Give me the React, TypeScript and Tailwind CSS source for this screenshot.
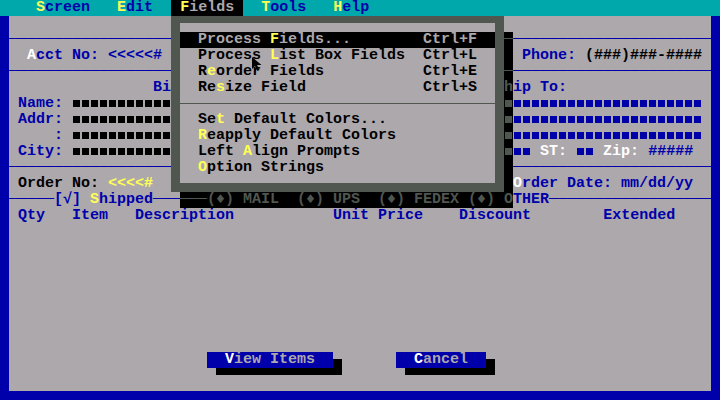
import React from 'react';

// text-mode palette
const BLUE = 'text-[#0000aa]';
const YEL = 'text-[#ffff55]';
const WHT = 'text-white';
const BLK = 'text-black';
const LG = 'text-[#aca8ac]';

// [column, content, colour, width in cells (defaults to text length)]
type Seg = [number, React.ReactNode, string?, number?];

// field fill: one small block per character cell
function Blocks({ n }: { n: number }) {
  return (
    <>
      {Array.from({ length: n }, (_, i) => (
        <span key={i} className="inline-block align-top w-[9px] h-4 pt-[4px] pl-[1px]">
          <span className="block w-[7px] h-[7px] bg-current" />
        </span>
      ))}
    </>
  );
}

// one 16px text row; each segment is placed at its column
function Row({ segs, start = 1, className = '' }: { segs: Seg[]; start?: number; className?: string }) {
  let cur = start;
  const out: React.ReactNode[] = [];
  segs.forEach(([col, text, cls, len], i) => {
    if (col > cur) out.push(<span key={'p' + i}>{' '.repeat(col - cur)}</span>);
    out.push(
      <span key={i} className={cls}>
        {text}
      </span>
    );
    cur = col + (len ?? [...String(text)].length);
  });
  return <div className={`h-4 leading-4 whitespace-pre ${className}`}>{out}</div>;
}

const line = (n: number) => '─'.repeat(n);
const fill = (col: number, n: number, cls: string): Seg => [col, <Blocks n={n} />, cls, n];

const menuItems: ({ label: string; k: number; sc?: string; sel?: boolean } | null)[] = [
  { label: 'Process Fields...', k: 8, sc: 'Ctrl+F', sel: true },
  { label: 'Process List Box Fields', k: 8, sc: 'Ctrl+L' },
  { label: 'Reorder Fields', k: 1, sc: 'Ctrl+E' },
  { label: 'Resize Field', k: 2, sc: 'Ctrl+S' },
  null,
  { label: 'Set Default Colors...', k: 2 },
  { label: 'Reapply Default Colors', k: 0 },
  { label: 'Left Align Prompts', k: 5 },
  { label: 'Option Strings', k: 0 },
];

function FieldsMenu() {
  return (
    <>
      <div className="absolute left-[171px] top-4 w-[333px] h-[176px] bg-[#505650] pt-[7px] px-[9px] pb-[9px]">
        <div className="h-full bg-[#aca8ac] pt-[9px]">
          {menuItems.map((it, i) =>
            it ? (
              <div
                key={i}
                className={`flex h-4 leading-4 whitespace-pre pl-[18px] ${it.sel ? 'bg-black ' + LG : BLK}`}
              >
                <span className="w-[225px]">
                  {it.label.slice(0, it.k)}
                  <span className={YEL}>{it.label[it.k]}</span>
                  {it.label.slice(it.k + 1)}
                </span>
                <span>{it.sc}</span>
              </div>
            ) : (
              <div key={i} className="h-4 pt-[7px]">
                <div className="h-px bg-[#505650]" />
              </div>
            )
          )}
        </div>
      </div>

      {/* drop shadow: right column and bottom row */}
      <div className="absolute left-[504px] top-8 w-[9px] bg-black text-[#505650]">
        {['─', ' ', '─', 'h', '■', '■', '■', '■', ' ', ' '].map((g, i) => (
          <div key={i} className="h-4 leading-4 whitespace-pre">
            {g === '■' ? <Blocks n={1} /> : g}
          </div>
        ))}
      </div>
      <div className="absolute left-[180px] top-[192px] w-[333px] h-4 leading-4 whitespace-pre bg-black text-[#505650]">
        {'───(♦) MAIL  (♦) UPS  (♦) FEDEX (♦) O'}
      </div>

      {/* mouse pointer */}
      <svg className="absolute left-[252px] top-[57px]" width="11" height="15" viewBox="0 0 11 15">
        <path d="M0 0 L0 12 L3 9 L5.5 14 L7.5 13 L5 8 L9.5 8 Z" fill="#000" />
      </svg>
    </>
  );
}

function DosButton({ hot, rest }: { hot: string; rest: string }) {
  return (
    <button className="h-4 leading-4 px-[18px] bg-[#0000aa] text-[#aca8ac] whitespace-pre shadow-[9px_7px_0_#000]">
      <span className="text-white">{hot}</span>
      {rest}
    </button>
  );
}

// horizontal rule split around the open menu
const ruleSegs: Seg[] = [
  [1, line(18), BLUE],
  [57, line(22), BLUE],
];

export default function App() {
  return (
    <div className="relative w-[720px] h-[400px] overflow-hidden bg-[#aca8ac] font-['Liberation_Mono',monospace] text-[15px] font-bold">
      {/* menu bar */}
      <Row
        start={0}
        className="bg-[#00a8ac]"
        segs={[
          [4, 'S', YEL],
          [5, 'creen', BLUE],
          [13, 'E', YEL],
          [14, 'dit', BLUE],
          [19, ' ', 'bg-black'],
          [20, 'F', 'bg-black ' + YEL],
          [21, 'ields ', 'bg-black ' + LG],
          [29, 'T', YEL],
          [30, 'ools', BLUE],
          [37, 'H', YEL],
          [38, 'elp', BLUE],
        ]}
      />

      <div className="flex h-[375px]">
        <div className="w-[9px] bg-[#0000aa]" />
        <div className="flex-1 flex flex-col">
          <Row segs={[]} />
          <Row segs={ruleSegs} />
          <Row
            segs={[
              [3, 'A', WHT],
              [4, 'cct No: ', BLUE],
              [12, '<<<<<#', BLUE],
              [58, 'Phone:', BLUE],
              [65, '(###)###-####', BLK],
            ]}
          />
          <Row segs={ruleSegs} />
          <Row segs={[[17, 'Bi', BLUE], [57, 'ip To:', BLUE]]} />
          <Row segs={[[2, 'Name:', BLUE], fill(8, 11, BLK), fill(57, 21, BLUE)]} />
          <Row segs={[[2, 'Addr:', BLUE], fill(8, 11, BLK), fill(57, 21, BLUE)]} />
          <Row segs={[[6, ':', BLUE], fill(8, 11, BLK), fill(57, 21, BLUE)]} />
          <Row
            segs={[
              [2, 'City:', BLUE],
              fill(8, 11, BLK),
              fill(57, 2, BLUE),
              [60, 'ST:', WHT],
              fill(64, 2, BLUE),
              [67, 'Zip:', WHT],
              [72, '#####', BLUE],
            ]}
          />
          <Row segs={ruleSegs} />
          <Row
            segs={[
              [2, 'Order No: ', BLK],
              [12, '<<<<#', YEL],
              [57, 'O', WHT],
              [58, 'rder Date: mm/dd/yy', BLUE],
            ]}
          />
          <Row
            segs={[
              [1, '─────[√] ', BLUE],
              [10, 'S', YEL],
              [11, 'hipped───', BLUE],
              [57, 'THER' + line(18), BLUE],
            ]}
          />
          <Row
            segs={[
              [2, 'Qty', BLUE],
              [8, 'Item', BLUE],
              [15, 'Description', BLUE],
              [37, 'Unit Price', BLUE],
              [51, 'Discount', BLUE],
              [67, 'Extended', BLUE],
            ]}
          />
          <div className="h-32" />
          <div className="flex h-4 pl-[198px] gap-[63px]">
            <DosButton hot="V" rest="iew Items" />
            <DosButton hot="C" rest="ancel" />
          </div>
        </div>
        <div className="w-[9px] bg-[#0000aa]" />
      </div>
      <div className="h-[9px] bg-[#0000aa]" />

      <FieldsMenu />
    </div>
  );
}
